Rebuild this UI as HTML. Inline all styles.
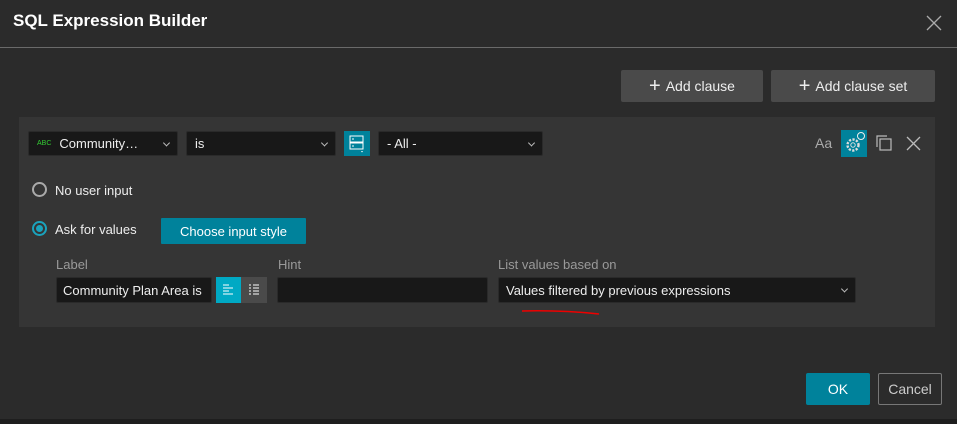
<!DOCTYPE html>
<html><head><style>
*{box-sizing:border-box;margin:0;padding:0}
body{width:957px;height:424px;background:#1e1e1e;font-family:"Liberation Sans",sans-serif;color:#fff;position:relative;overflow:hidden}
.dlg{position:absolute;left:0;top:0;width:957px;height:419px;background:#2b2b2b}
.abs{position:absolute}
.title{left:13px;top:11px;font-size:17px;font-weight:bold;color:#fff}
.hr{left:0;top:47px;width:957px;height:1px;background:#6a6a6a}
.btn{background:#4a4a4a;font-size:14px;color:#eee;display:flex;align-items:center;justify-content:center;border-radius:2px}
.panel{left:19px;top:117px;width:916px;height:210px;background:#353535}
.inp{background:#181818;border:1px solid #2a2a2a;border-radius:2px;font-size:13px;color:#eee;display:flex;align-items:center;padding-left:8px}
.chev{position:absolute;right:8px;top:50%;width:5px;height:5px;border-right:1px solid #bbb;border-bottom:1px solid #bbb;transform:translateY(-70%) rotate(45deg)}
.teal{background:#00829b}
.lbl{font-size:13px;color:#9a9a9a}
.radio{width:15px;height:15px;border-radius:50%;border:2px solid #aaa}
</style></head><body>
<div class="dlg">
<div class="abs title">SQL Expression Builder</div>
<svg class="abs" style="left:926px;top:15px" width="16" height="16"><path d="M1 1L15 15M15 1L1 15" stroke="#aaa" stroke-width="1.3"/></svg>
<div class="abs hr"></div>
<div class="abs btn" style="left:621px;top:70px;width:142px;height:32px"><span style="font-size:20px;font-weight:300;margin-right:5px">+</span>Add clause</div>
<div class="abs btn" style="left:771px;top:70px;width:164px;height:32px"><span style="font-size:20px;font-weight:300;margin-right:5px">+</span>Add clause set</div>
<div class="abs panel"></div>
<div class="abs inp" style="left:28px;top:131px;width:150px;height:25px"><span style="color:#3c3;font-size:7px;margin-right:8px">ABC</span>Community…<i class="chev"></i></div>
<div class="abs inp" style="left:186px;top:131px;width:150px;height:25px">is<i class="chev"></i></div>
<div class="abs teal" style="left:344px;top:131px;width:26px;height:25px"><svg width="26" height="25"><rect x="6" y="5" width="13" height="6" fill="none" stroke="#fff"/><rect x="6" y="12" width="13" height="6" fill="none" stroke="#fff"/><path d="M8 8h2M8 15h2" stroke="#fff"/><path d="M17 20l1 1.5 1-1.5z" fill="#fff"/></svg></div>
<div class="abs inp" style="left:378px;top:131px;width:165px;height:25px">- All -<i class="chev"></i></div>
<div class="abs" style="left:815px;top:135px;font-size:14px;color:#aaa">Aa</div>
<div class="abs teal" style="left:841px;top:130px;width:26px;height:27px"><svg width="26" height="27"><circle cx="12" cy="15" r="5.5" fill="none" stroke="#ddd" stroke-dasharray="2.2 1.4" stroke-width="2.4"/><circle cx="12" cy="15" r="2.2" fill="none" stroke="#ddd"/><circle cx="20" cy="6" r="3.5" fill="none" stroke="#eee"/></svg></div>
<svg class="abs" style="left:876px;top:135px" width="16" height="17"><path d="M1 12V1h10" fill="none" stroke="#bbb" stroke-width="1.2"/><rect x="4" y="4" width="11" height="11" fill="none" stroke="#bbb" stroke-width="1.2"/></svg>
<svg class="abs" style="left:906px;top:136px" width="15" height="15"><path d="M1 1L14 14M14 1L1 14" stroke="#bbb" stroke-width="1.3"/></svg>
<div class="abs radio" style="left:32px;top:182px"></div>
<div class="abs" style="left:55px;top:183px;font-size:13px;color:#eee">No user input</div>
<div class="abs radio" style="left:32px;top:221px;border-color:#1aa3bd;display:flex;align-items:center;justify-content:center"><div style="width:7px;height:7px;border-radius:50%;background:#1aa3bd"></div></div>
<div class="abs" style="left:55px;top:222px;font-size:13px;color:#eee">Ask for values</div>
<div class="abs teal" style="left:161px;top:218px;width:145px;height:26px;font-size:13px;display:flex;align-items:center;justify-content:center;border-radius:1px">Choose input style</div>
<div class="abs lbl" style="left:56px;top:257px">Label</div>
<div class="abs lbl" style="left:278px;top:257px">Hint</div>
<div class="abs lbl" style="left:498px;top:257px">List values based on</div>
<div class="abs inp" style="left:56px;top:277px;width:156px;height:26px;padding-left:6px">Community Plan Area is</div>
<div class="abs" style="left:216px;top:277px;width:25px;height:26px;background:#00a9c4"><svg width="25" height="26"><path d="M7 8h6M7 11h10M7 14h6M7 17h10" stroke="#fff"/></svg></div>
<div class="abs" style="left:241px;top:277px;width:26px;height:26px;background:#4a4a4a"><svg width="26" height="26"><path d="M8 8h2M12 8h6M8 11h2M12 11h6M8 14h2M12 14h6M8 17h2M12 17h6" stroke="#fff"/></svg></div>
<div class="abs inp" style="left:277px;top:277px;width:211px;height:26px"></div>
<div class="abs inp" style="left:498px;top:277px;width:358px;height:26px;padding-left:7px">Values filtered by previous expressions<i class="chev"></i></div>
<svg class="abs" style="left:520px;top:309px" width="82" height="8"><path d="M2 2Q40 1 79 5" stroke="#e00" stroke-width="1.5" fill="none"/></svg>
<div class="abs teal" style="left:806px;top:373px;width:64px;height:32px;font-size:14px;display:flex;align-items:center;justify-content:center;border-radius:2px">OK</div>
<div class="abs" style="left:878px;top:373px;width:64px;height:32px;font-size:14px;border:1px solid #777;color:#ccc;display:flex;align-items:center;justify-content:center;border-radius:2px">Cancel</div>
</div>
</body></html>
